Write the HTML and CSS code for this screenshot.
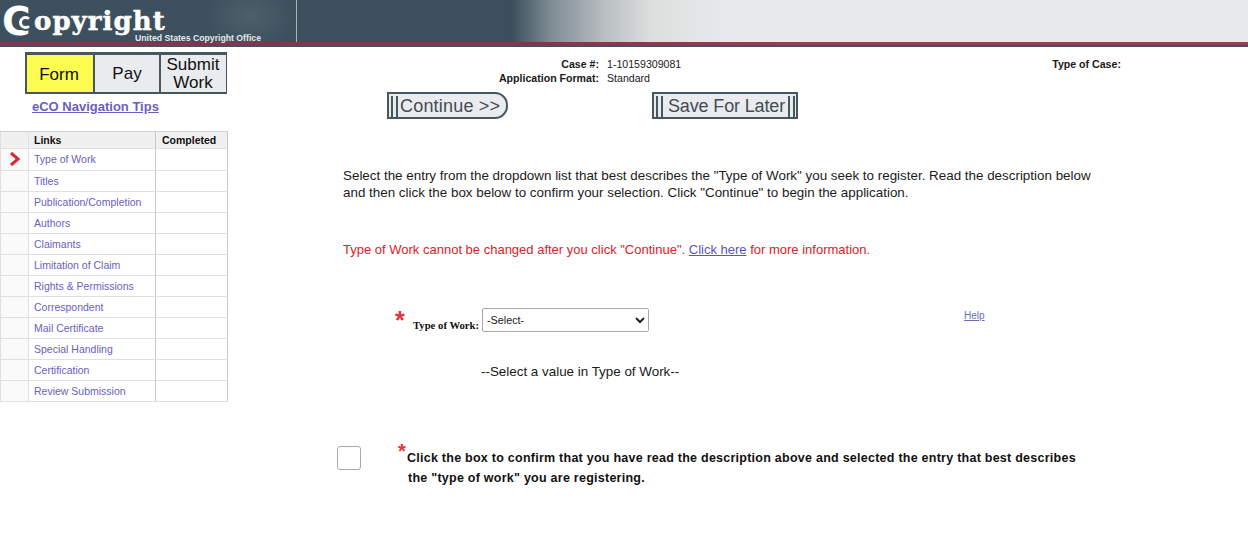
FILE: index.html
```html
<!DOCTYPE html>
<html lang="en">
<head>
<meta charset="utf-8">
<title>Copyright</title>
<link rel="stylesheet" href="styles.css">
</head>
<body>
<header class="banner">
  <div class="banner-top">
    <div class="logo">
      <div class="logo-word"><span class="logo-c">C<span class="logo-ring"></span></span><span class="logo-rest">opyright</span></div>
      <div class="logo-sub">United States Copyright Office</div>
    </div>
    <div class="banner-rule"></div>
  </div>
  <div class="banner-red"></div>
  <div class="banner-slate"></div>
</header>
<div class="page">
  <aside class="side">
    <div class="tabs">
      <div class="tab tab-on">Form</div>
      <div class="tab">Pay</div>
      <div class="tab tab-two">Submit<br>Work</div>
    </div>
    <a class="tips" href="#">eCO Navigation Tips</a>
    <table class="steps">
      <thead>
        <tr><th class="c-mark"></th><th class="c-link">Links</th><th class="c-done">Completed</th></tr>
      </thead>
      <tbody>
        <tr class="row-first"><td class="c-mark"><svg class="arrow" width="12" height="16" viewBox="0 0 12 16"><path d="M2 2 L9 8 L2 14" fill="none" stroke="#d62a35" stroke-width="3"/></svg></td><td class="c-link"><a href="#">Type of Work</a></td><td></td></tr>
        <tr><td class="c-mark"></td><td class="c-link"><a href="#">Titles</a></td><td></td></tr>
        <tr><td class="c-mark"></td><td class="c-link"><a href="#">Publication/Completion</a></td><td></td></tr>
        <tr><td class="c-mark"></td><td class="c-link"><a href="#">Authors</a></td><td></td></tr>
        <tr><td class="c-mark"></td><td class="c-link"><a href="#">Claimants</a></td><td></td></tr>
        <tr><td class="c-mark"></td><td class="c-link"><a href="#">Limitation of Claim</a></td><td></td></tr>
        <tr><td class="c-mark"></td><td class="c-link"><a href="#">Rights &amp; Permissions</a></td><td></td></tr>
        <tr><td class="c-mark"></td><td class="c-link"><a href="#">Correspondent</a></td><td></td></tr>
        <tr><td class="c-mark"></td><td class="c-link"><a href="#">Mail Certificate</a></td><td></td></tr>
        <tr><td class="c-mark"></td><td class="c-link"><a href="#">Special Handling</a></td><td></td></tr>
        <tr><td class="c-mark"></td><td class="c-link"><a href="#">Certification</a></td><td></td></tr>
        <tr><td class="c-mark"></td><td class="c-link"><a href="#">Review Submission</a></td><td></td></tr>
      </tbody>
    </table>
  </aside>
  <main class="main">
    <div class="case">
      <dl class="case-info">
        <dt>Case #:</dt><dd>1-10159309081</dd>
        <dt>Application Format:</dt><dd>Standard</dd>
      </dl>
      <div class="case-type">Type of Case:</div>
    </div>
    <div class="actions">
      <button class="btn btn-continue" type="button"><span class="bars"></span>Continue &gt;&gt;</button>
      <button class="btn btn-save" type="button"><span class="bars"></span>Save For Later<span class="bars"></span></button>
    </div>
    <p class="intro">Select the entry from the dropdown list that best describes the "Type of Work" you seek to register. Read the description below and then click the box below to confirm your selection. Click "Continue" to begin the application.</p>
    <p class="warning">Type of Work cannot be changed after you click "Continue". <a href="#">Click here</a> for more information.</p>
    <div class="field">
      <span class="star">*</span>
      <label class="field-label" for="tow">Type of Work:</label>
      <select class="field-select" id="tow"><option>-Select-</option></select>
      <a class="help" href="#">Help</a>
    </div>
    <div class="desc">--Select a value in Type of Work--</div>
    <div class="confirm">
      <span class="check"></span>
      <span class="star star-small">*</span>
      <div class="confirm-text">Click the box to confirm that you have read the description above and selected the entry that best describes<br><span class="confirm-second">the "type of work" you are registering.</span></div>
    </div>
  </main>
</div>
</body>
</html>
```
FILE: styles.css
```css
* { box-sizing: border-box; }
html, body { margin: 0; padding: 0; }
body {
  background: #fff;
  color: #1a1a1a;
  font-family: "Liberation Sans", Arial, sans-serif;
  width: 1248px;
  height: 538px;
  overflow: hidden;
}
.banner-top {
  height: 42px;
  display: flex;
  background:
    radial-gradient(ellipse 45px 34px at 250px 16px, rgba(120, 140, 150, .28), rgba(120, 140, 150, 0) 100%),
    linear-gradient(90deg, #3c505d 0, #3b4f5c 512px, #7f8e96 552px, #b5bbbe 601px, #dcdedd 650px, #e8e9eb 725px, #e8e9eb 100%);
}
.logo { width: 296px; height: 42px; padding: 0 0 0 2px; }
.logo-word {
  color: #fff;
  font-family: "DejaVu Serif", serif;
  font-weight: 700;
  height: 33px;
  white-space: nowrap;
  display: flex;
  align-items: flex-start;
}
.logo-c {
  font-family: "DejaVu Sans", sans-serif;
  font-size: 39px;
  line-height: 40px;
  width: 32px;
  margin-top: 2px;
  flex: none;
  position: relative;
}
.logo-ring {
  position: absolute;
  left: 17px;
  top: 14px;
  width: 13px;
  height: 13px;
  background: #3c505d;
  border: 3.5px solid #fff;
  border-right-color: #3c505d;
  border-radius: 50%;
  box-shadow: 0 0 0 2px #3c505d;
}
.logo-rest {
  font-size: 26px;
  line-height: 30px;
  margin-top: 6px;
  letter-spacing: 1.05px;
  -webkit-text-stroke: .5px #fff;
}
.logo-sub {
  color: #e6e9ea;
  font-size: 8.7px;
  font-weight: 700;
  margin: 0 0 0 133px;
  line-height: 10px;
  white-space: nowrap;
}
.banner-rule { width: 1px; height: 42px; background: #aab4ba; }
.banner-red { height: 3px; background: linear-gradient(90deg, #7a3a48 0, #7a3a48 520px, #96404f 800px, #96404f 100%); }
.banner-slate { height: 2px; background: #3f5463; }

.page { display: flex; }
.side { width: 228px; flex: none; padding-top: 5px; }
.tabs {
  display: flex;
  width: 202px;
  height: 42px;
  margin-left: 25px;
  background: #46575f;
  padding: 3px 1px 2px 2px;
  gap: 2px;
}
.tab {
  flex: 1;
  background: #e9ebee;
  color: #111;
  font-size: 17px;
  text-align: center;
  line-height: 37px;
}
.tab-on { background: #fbfb50; padding: 1px 2px 0 0; }
.tab-two { line-height: 18px; padding: 1px 1px 0 0; font-size: 17px; }
.tips {
  display: block;
  margin: 5px 0 0 32px;
  color: #6a5fc0;
  font-size: 13px;
  font-weight: 700;
  line-height: 15px;
}
.steps {
  margin-top: 17px;
  width: 228px;
  height: 270px;
  border-collapse: collapse;
  table-layout: fixed;
  font-size: 10.5px;
}
.steps th, .steps td { border: 1px solid #e0e0e0; padding: 0; }
.steps th {
  height: 17px;
  background: #f0f0f0;
  text-align: left;
  font-weight: 700;
  font-size: 10.5px;
  color: #111;
  border-top-color: #d0d0d0;
}
.steps td { height: 21px; }
.steps .row-first td { height: 22px; padding-bottom: 2px; }
.steps .c-mark { width: 28px; background: #fafafa; text-align: center; }
.steps th.c-mark { background: #f0f0f0; }
.steps .c-link { width: 127px; padding-left: 5px; border-right-color: #c8c8c8; }
.steps td:last-child, .steps th:last-child { border-right-color: #c8c8c8; }
.steps th.c-done { padding-left: 6px; }
.steps a { color: #6a60c2; text-decoration: none; }
.arrow { display: block; margin: 0 auto; }

.main { flex: 1; min-width: 0; position: relative; }
.case { display: flex; padding-top: 10px; height: 45px; font-size: 10.6px; line-height: 14px; }
.case-info {
  margin: 0;
  display: grid;
  grid-template-columns: 371px auto;
  column-gap: 8px;
  align-content: start;
}
.case-info dt { font-weight: 700; text-align: right; }
.case-info dd { margin: 0; }
.case-type { margin-left: 371px; font-weight: 700; }
.actions { display: flex; padding-left: 159px; }
.btn {
  height: 27px;
  border: 2px solid #47575f;
  background: #e9ebee;
  color: #444c52;
  font-family: "Liberation Sans", Arial, sans-serif;
  font-size: 18px;
  line-height: 26px;
  padding: 1px 0 0;
  display: flex;
  align-items: center;
  white-space: nowrap;
}
.btn-continue { width: 121px; border-radius: 0 13px 13px 0; letter-spacing: 0.2px; }
.btn-save { width: 146px; margin-left: 144px; justify-content: space-between; letter-spacing: -0.15px; }
.bars {
  width: 7px;
  height: 21px;
  margin: 0 2px 0 2px;
  flex: none;
  border-left: 2px solid #47575f;
  border-right: 2px solid #47575f;
}
.btn-save .bars:last-child { margin: 0 1px 0 0; }
.intro {
  margin: 48px 0 0 115px;
  width: 760px;
  font-size: 13.4px;
  line-height: 17px;
  color: #1c1c1c;
}
.warning {
  margin: 40px 0 0 115px;
  font-size: 13px;
  line-height: 17px;
  color: #e02027;
}
.warning a { color: #5b55b5; }
.field {
  display: flex;
  align-items: flex-start;
  margin: 50px 0 0 167px;
  height: 24px;
  position: relative;
}
.star { color: #e8303a; font-weight: 700; font-size: 25px; line-height: 24px; width: 18px; flex: none; }
.field-label {
  font-family: "Liberation Serif", serif;
  font-weight: 700;
  font-size: 10.7px;
  line-height: 12px;
  padding-top: 11px;
  width: 69px;
  flex: none;
  color: #111;
}
.field-select {
  width: 167px;
  height: 24px;
  background: #fff;
  border: 1px solid #a8a8a8;
  border-radius: 2px;
  font-family: "Liberation Sans", Arial, sans-serif;
  font-size: 10.8px;
  color: #222;
}
.help { margin: 2px 0 0 315px; font-size: 10px; line-height: 12px; color: #6a6ac0; }
.desc { margin: 31px 0 0 253px; font-size: 13.4px; line-height: 17px; }
.confirm { display: flex; margin: 66px 0 0 109px; align-items: flex-start; }
.check {
  width: 24px;
  height: 24px;
  border: 1px solid #a9a9a9;
  border-radius: 3px;
  flex: none;
}
.star-small { font-size: 20px; line-height: 14px; width: 9px; margin-left: 37px; height: 14px; margin-top: -2px; }
.confirm-text { font-size: 12.5px; font-weight: 700; line-height: 20px; color: #111; white-space: nowrap; margin-top: 2px; letter-spacing: .25px; }
.confirm-second { margin-left: 1px; }
```
